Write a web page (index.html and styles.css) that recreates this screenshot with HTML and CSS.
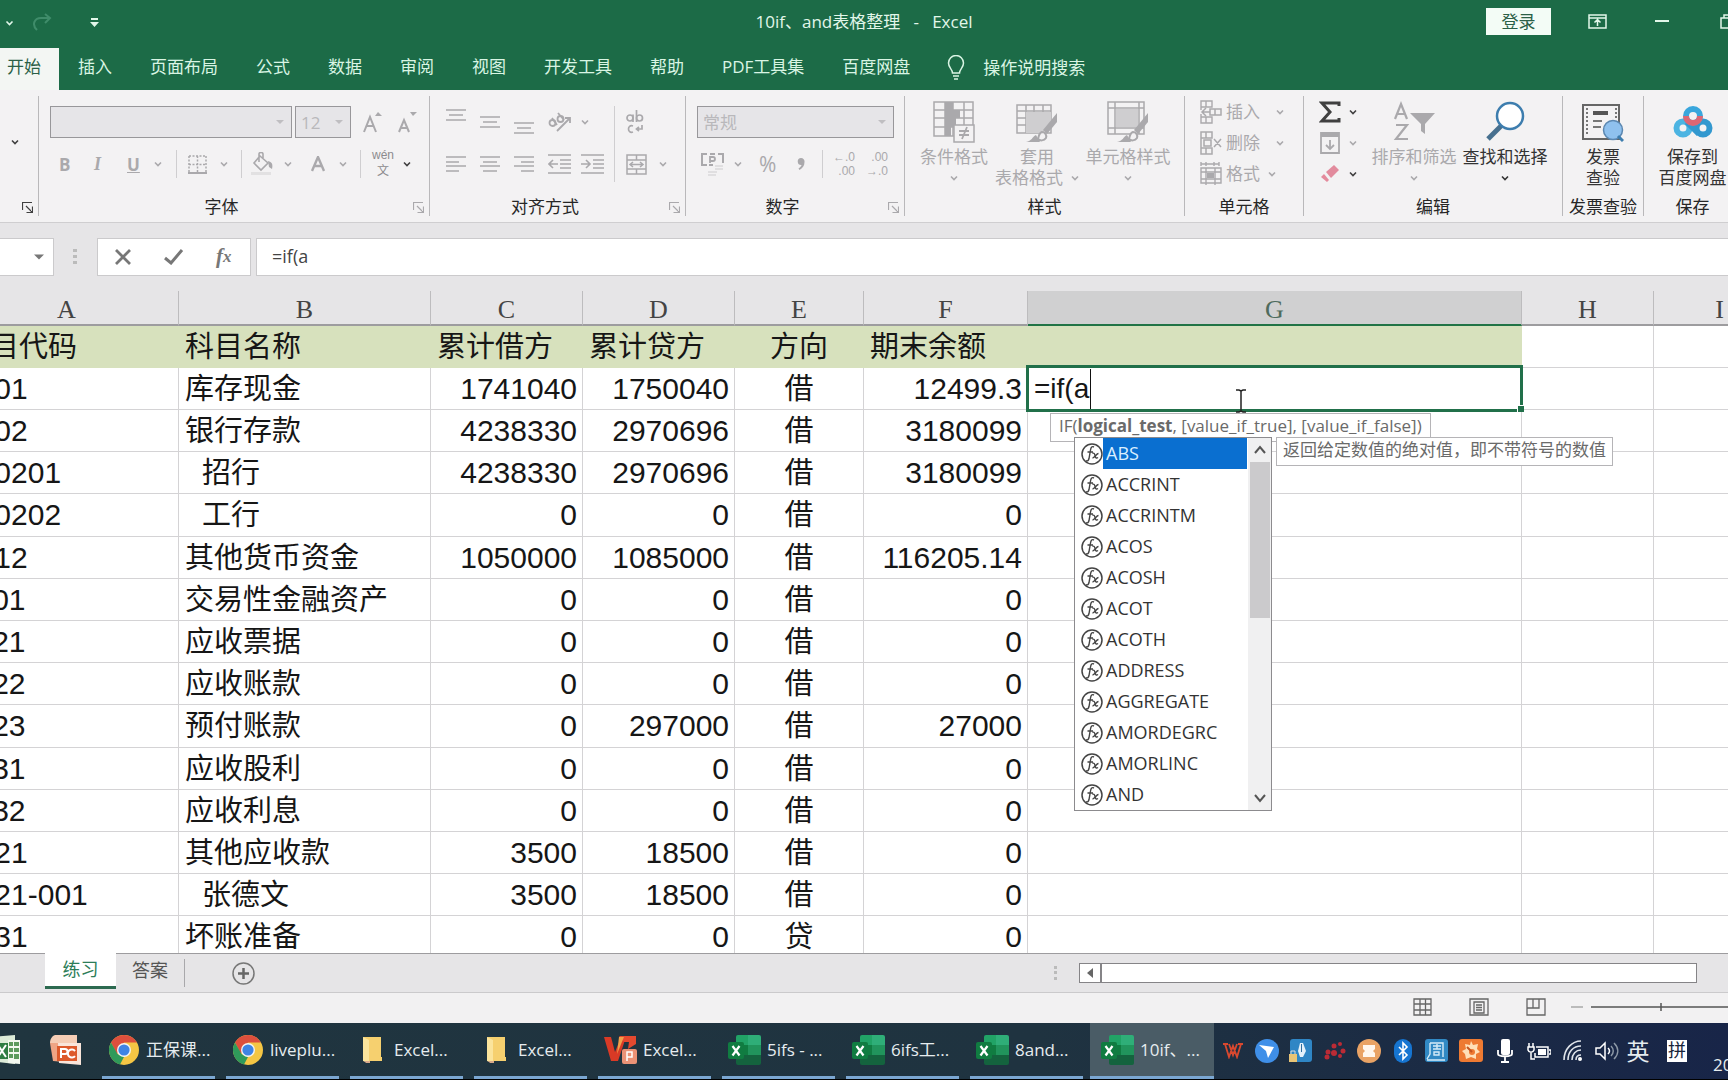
FILE: index.html
```html
<!DOCTYPE html>
<html lang="zh-CN">
<head>
<meta charset="utf-8">
<title>10if、and表格整理 - Excel</title>
<link rel="stylesheet" href="styles.css">
</head>
<body>
<svg class="defs" aria-hidden="true">
  <symbol id="chev" viewBox="0 0 8 6"><path d="M1 1.500 4 4.500 7 1.500" fill="none" stroke="currentColor" stroke-width="1.600"/></symbol>
  <symbol id="tri" viewBox="0 0 8 6"><path d="M0 1h8L4 5z" fill="currentColor"/></symbol>
  <symbol id="launch" viewBox="0 0 11 11"><path d="M.5 8V.5H10M4 4l6 6M10.500 4.500v6h-6" fill="none" stroke="currentColor" stroke-width="1.200"/></symbol>
  <symbol id="brush" viewBox="0 0 42 42"><path d="M41 12v9L31 33l-4-4z" fill="currentColor"/><path d="M26 31c3 0 5 3 4 6-2 3-6 3-8 1 1-4 1-6 4-7z" fill="#f3f2f3" stroke="currentColor" stroke-width="2"/><path d="M10 41c6-1 6-5 10-7l4 7z" fill="currentColor"/></symbol>
  <symbol id="fx" viewBox="0 0 22 22"><circle cx="11" cy="11" r="10" fill="#fff" stroke="#444" stroke-width="1.500"/><path d="M13 4c-2-1-3 0-3.500 3L8 15.500c-.4 2-1.500 3-3 2M6.500 9H12M11.500 10.500c1.500-1 2 0 2.500 2s1 3.500 3 2M17.500 10.500c-2 0-4 4.500-6 4.500" fill="none" stroke="#444" stroke-width="1.400"/></symbol>
  <symbol id="chrome" viewBox="0 0 32 32"><circle cx="16" cy="16" r="15" fill="#f5c644"/><path d="M3 8.500A15 15 0 0 1 29 8.500H16L9 20z" fill="#dd4f3d"/><path d="M3 8.500 9.500 20 16 23l-4 7.500A15 15 0 0 1 3 8.500z" fill="#2f9a5a"/><circle cx="16" cy="16" r="7" fill="#f4f4f4"/><circle cx="16" cy="16" r="5.600" fill="#3f84e5"/></symbol>
  <symbol id="folder" viewBox="0 0 20 28"><path d="M1 1h18v20h1v4H6z" fill="#f6d06f"/><path d="M1 1 7 4v23l-6-2z" fill="#fbe49c"/><path d="M2 25h6v2H4z" fill="#d9a98a"/></symbol>
  <symbol id="xl" viewBox="0 0 33 30"><path d="M8 2a2 2 0 0 1 2-2h10v10H8z" fill="#21a366"/><path d="M20 0h11a2 2 0 0 1 2 2v8H20z" fill="#2fae78"/><path d="M8 10h12v10H8z" fill="#107c41"/><path d="M20 10h13v10H20z" fill="#21945c"/><path d="M8 20h25v8a2 2 0 0 1-2 2H10a2 2 0 0 1-2-2z" fill="#14633e"/><rect y="7" width="16" height="17" rx="2" fill="#107c41"/><path d="m4.500 11 7 9.500m0-9.500-7 9.500" stroke="#fff" stroke-width="2.200"/></symbol>
</svg>

<header class="titlebar">
  <div class="quick">
    <button class="ico" aria-label="撤消选项"><svg width="9" height="6"><use href="#chev"/></svg></button>
    <button class="ico redo" aria-label="恢复"><svg width="20" height="19" viewBox="0 0 20 19"><path d="M5 17C-1 11 3 5 9 5h9M13 1l5 4-5 5" fill="none" stroke="currentColor" stroke-width="2"/></svg></button>
    <button class="ico" aria-label="自定义快速访问工具栏"><svg width="9" height="9" viewBox="0 0 9 9"><path d="M1 0h7v2H1zM0 4h9L4.500 9z" fill="currentColor"/></svg></button>
  </div>
  <h1>10if、and表格整理&nbsp;&nbsp; -&nbsp;&nbsp; Excel</h1>
  <div class="window">
    <button class="signin">登录</button>
    <button class="ico w60" aria-label="功能区显示选项"><svg width="19" height="15" viewBox="0 0 19 15"><path d="M1 1h17v13H1zM1 4h17M9.500 12V6M6.500 8.500l3-3 3 3" fill="none" stroke="currentColor" stroke-width="1.500"/></svg></button>
    <button class="ico w70" aria-label="最小化"><svg width="14" height="2"><rect width="14" height="2" fill="currentColor"/></svg></button>
    <button class="ico restore" aria-label="还原"><svg width="17" height="15" viewBox="0 0 17 15"><path d="M1 4h11v10H1zM4 4V1h12v10h-4" fill="none" stroke="currentColor" stroke-width="1.500"/></svg></button>
  </div>
</header>

<nav class="tabs">
  <button class="on">开始</button><button>插入</button><button>页面布局</button><button>公式</button><button>数据</button><button>审阅</button><button>视图</button><button>开发工具</button><button>帮助</button><button>PDF工具集</button><button>百度网盘</button>
  <button class="tell"><svg width="18" height="25" viewBox="0 0 18 25"><path d="M5.500 18c0-4-4-5-4-10a7.500 7.500 0 0 1 15 0c0 5-4 6-4 10zM6 21h6M7 24h4" fill="none" stroke="currentColor" stroke-width="1.500"/></svg>操作说明搜索</button>
</nav>

<section class="ribbon">
  <div class="group clip">
    <div class="body"><button class="ico dark" aria-label="粘贴选项"><svg width="8" height="6"><use href="#chev"/></svg></button></div>
    <div class="label"><span></span><button class="ico launch dark" aria-label="剪贴板"><svg width="11" height="11"><use href="#launch"/></svg></button></div>
  </div>

  <div class="group font">
    <div class="body rows">
      <div class="row">
        <select class="sel-font" aria-label="字体" disabled><option></option></select>
        <select class="sel-size" aria-label="字号" disabled><option>12</option></select>
        <button class="ico glyph" aria-label="增大字号"><svg width="20" height="22" viewBox="0 0 20 22"><path d="m1 21 6-15 6 15M3 15h8" fill="none" stroke="currentColor" stroke-width="2"/><path d="m12 5 3-4 4 4z" fill="currentColor"/></svg></button>
        <button class="ico glyph" aria-label="减小字号"><svg width="20" height="22" viewBox="0 0 20 22"><path d="m1 21 5-12 5 12M3 17h6" fill="none" stroke="currentColor" stroke-width="2"/><path d="m12 1 3 4 4-4z" fill="currentColor"/></svg></button>
      </div>
      <div class="row font-row">
        <button class="ico b" aria-label="加粗">B</button><button class="ico i" aria-label="倾斜">I</button><button class="ico u" aria-label="下划线">U</button>
        <button class="ico" aria-label="下划线选项"><svg width="8" height="6"><use href="#chev"/></svg></button>
        <i class="sep"></i>
        <button class="ico" aria-label="边框"><svg width="19" height="19" viewBox="0 0 19 19"><path d="M1 1h17M1 1v16M18 1v16M9.500 1v16M1 9.500h17" stroke="currentColor" stroke-width="1.500" stroke-dasharray="2 1.500"/><path d="M0 18h19" stroke="currentColor" stroke-width="2"/></svg></button>
        <button class="ico" aria-label="边框选项"><svg width="8" height="6"><use href="#chev"/></svg></button>
        <i class="sep"></i>
        <button class="ico" aria-label="填充颜色"><svg width="24" height="24" viewBox="0 0 24 24"><path d="m9 4 8 7-7 7-7-7zM8 10V2c0-2 4-2 4 0v4" fill="none" stroke="currentColor" stroke-width="1.600"/><path d="M17 9c4 1 5 3 4 8l-3-2z" fill="currentColor"/><path d="M0 20h20v3H0z" fill="#e2e1e2"/></svg></button>
        <button class="ico" aria-label="填充选项"><svg width="8" height="6"><use href="#chev"/></svg></button>
        <button class="ico" aria-label="字体颜色"><svg width="14" height="16" viewBox="0 0 14 16"><path d="M1 15 7 1l6 14M3 10h8" fill="none" stroke="currentColor" stroke-width="2.400"/></svg></button>
        <button class="ico" aria-label="颜色选项"><svg width="8" height="6"><use href="#chev"/></svg></button>
        <i class="sep"></i>
        <button class="ico wen"><span>wén</span><span>文</span></button>
        <button class="ico dark" aria-label="拼音选项"><svg width="8" height="6"><use href="#chev"/></svg></button>
      </div>
    </div>
    <div class="label"><span>字体</span><button class="ico launch" aria-label="字体设置"><svg width="11" height="11"><use href="#launch"/></svg></button></div>
  </div>

  <div class="group align">
    <div class="body split">
      <div class="align-grid">
        <button class="ico top" aria-label="顶端对齐"><svg width="20" height="12" viewBox="0 0 20 12"><path d="M0 1h20M3 6h14M0 11h20" stroke="currentColor" stroke-width="1.500"/></svg></button>
        <button class="ico" aria-label="垂直居中"><svg width="20" height="12" viewBox="0 0 20 12"><path d="M0 1h20M3 6h14M0 11h20" stroke="currentColor" stroke-width="1.500"/></svg></button>
        <button class="ico bottom" aria-label="底端对齐"><svg width="20" height="12" viewBox="0 0 20 12"><path d="M0 1h20M3 6h14M0 11h20" stroke="currentColor" stroke-width="1.500"/></svg></button>
        <button class="ico" aria-label="方向"><svg width="24" height="22" viewBox="0 0 24 22"><g fill="none" stroke="currentColor" stroke-width="1.800"><circle cx="4.500" cy="12" r="3"/><path d="m4 7 5 7M10 2l6 7"/><circle cx="12.500" cy="8" r="3"/><path d="M9 20 22 7M17 7h5v5"/></g></svg></button>
        <button class="ico" aria-label="方向选项"><svg width="8" height="6"><use href="#chev"/></svg></button>
        <button class="ico" aria-label="左对齐"><svg width="20" height="16" viewBox="0 0 20 16"><path d="M0 1h20M0 6h13M0 10h20M0 15h13" stroke="currentColor" stroke-width="1.500"/></svg></button>
        <button class="ico" aria-label="居中"><svg width="20" height="16" viewBox="0 0 20 16"><path d="M0 1h20M3 6h14M0 10h20M3 15h14" stroke="currentColor" stroke-width="1.500"/></svg></button>
        <button class="ico" aria-label="右对齐"><svg width="20" height="16" viewBox="0 0 20 16"><path d="M0 1h20M7 6h13M0 10h20M7 15h13" stroke="currentColor" stroke-width="1.500"/></svg></button>
        <button class="ico" aria-label="减少缩进"><svg width="23" height="20" viewBox="0 0 23 20"><path d="M0 1h23M12 6h11M12 10h11M12 14h11M0 19h23M10 10H2M5 6l-4 4 4 4" fill="none" stroke="currentColor" stroke-width="1.600"/></svg></button>
        <button class="ico" aria-label="增加缩进"><svg width="23" height="20" viewBox="0 0 23 20"><path d="M0 1h23M12 6h11M12 10h11M12 14h11M0 19h23M0 10h8M5 6l4 4-4 4" fill="none" stroke="currentColor" stroke-width="1.600"/></svg></button>
      </div>
      <i class="sep tall"></i>
      <div class="wrap-grid">
        <button class="ico" aria-label="自动换行"><svg width="18" height="24" viewBox="0 0 18 24"><g fill="none" stroke="currentColor" stroke-width="1.700"><circle cx="4" cy="8" r="3"/><path d="M7 4.500V12M10.500 0v12"/><circle cx="13.500" cy="8" r="3"/><path d="M7 16c-6-2-6 8 0 6M16 15v4h-5M13 17l-2.500 2 2.500 2"/></g></svg></button><span></span>
        <button class="ico" aria-label="合并后居中"><svg width="21" height="21" viewBox="0 0 21 21"><path d="M1 1h19v19H1zM1 6h19M1 15h19M10.500 1v5M10.500 15v5M4 10.500h13M7 8l-3 2.500L7 13M14 8l3 2.500-3 2.500" fill="none" stroke="currentColor" stroke-width="1.500"/></svg></button>
        <button class="ico" aria-label="合并选项"><svg width="8" height="6"><use href="#chev"/></svg></button>
      </div>
    </div>
    <div class="label"><span>对齐方式</span><button class="ico launch" aria-label="对齐设置"><svg width="11" height="11"><use href="#launch"/></svg></button></div>
  </div>

  <div class="group number">
    <div class="body rows">
      <div class="row"><select class="sel-num" aria-label="数字格式" disabled><option>常规</option></select></div>
      <div class="row num-row">
        <button class="ico" aria-label="会计数字格式"><svg width="24" height="24" viewBox="0 0 24 24"><path d="M1 7V2h5M17 2h5v5M1 7v6h5M9 2h5M22 7v4M8 13h4" fill="none" stroke="currentColor" stroke-width="2"/><path d="M9 11V5h3a2 2 0 0 1 0 4h-3" fill="none" stroke="currentColor" stroke-width="1.800"/><path d="M14 14h8M14 17h8M7 20h9M7 23h8" stroke="currentColor" opacity=".5"/></svg></button>
        <button class="ico" aria-label="货币选项"><svg width="8" height="6"><use href="#chev"/></svg></button>
        <button class="ico pct">%</button><button class="ico comma" aria-label="千位分隔"><svg width="8" height="12" viewBox="0 0 8 12"><path d="M4 0a3.500 3.500 0 0 1 3.500 4c0 4-2 6-5 8l-1-1.500C3.500 9 4.500 8 4.500 7A3.500 3.500 0 0 1 4 0z" fill="currentColor"/></svg></button>
        <i class="sep"></i>
        <button class="ico dec"><span>←.0</span><span>.00</span></button>
        <button class="ico dec"><span>.00</span><span>→.0</span></button>
      </div>
    </div>
    <div class="label"><span>数字</span><button class="ico launch" aria-label="数字设置"><svg width="11" height="11"><use href="#launch"/></svg></button></div>
  </div>

  <div class="group styles">
    <div class="body bigs">
      <button class="big w82"><svg width="42" height="42" viewBox="0 0 42 42"><path d="M1 1h39v34H1zM1 9h39M1 17h39M1 26h39M12 1v34M20 1v34M31 1v34" fill="none" stroke="currentColor" stroke-width="1.500"/><path d="M12 1h8v8h-8zM12 9h15v8H12zM12 17h11v9H12zM12 26h6v9h-6z" fill="currentColor"/><path d="M21 24h20v17H21z" fill="#f3f2f3" stroke="currentColor" stroke-width="1.500"/><path d="M26 30h10M26 34h10M34 26l-5 12" stroke="currentColor" stroke-width="1.800"/></svg>条件格式<svg class="drop" width="8" height="6"><use href="#chev"/></svg></button>
      <button class="big w84"><svg width="42" height="42" viewBox="0 0 42 42"><path d="M1 4h34v28H1zM1 10h34M1 17h34M1 24h34M10 4v28M18 4v28M27 4v28" fill="none" stroke="currentColor" stroke-width="1.500"/><path d="M10 11h25v14l-9 7H10z" fill="#cfced0"/><use href="#brush"/></svg>套用<span class="two">表格格式<svg width="8" height="6"><use href="#chev"/></svg></span></button>
      <button class="big w98"><svg width="42" height="42" viewBox="0 0 42 42"><path d="M1 1h36v32H1zM1 7h36M8 1v32M1 27h36M32 1v32" fill="none" stroke="currentColor" stroke-width="1.500"/><path d="M9 8h22v18H9z" fill="#cfced0"/><use href="#brush"/></svg>单元格样式<svg class="drop" width="8" height="6"><use href="#chev"/></svg></button>
    </div>
    <div class="label"><span>样式</span></div>
  </div>

  <div class="group cells">
    <div class="body stack">
      <button class="small"><svg width="22" height="24" viewBox="0 0 22 24"><path d="M1 1h11v6H1zM6 1v6M1 17h11v6H1zM6 17v6M1 7v3M1 14v3" fill="none" stroke="currentColor" stroke-width="1.400"/><path d="M10 9h11v6H10zM3 12h7M6 8l-4 4 4 4M15 9v6" fill="none" stroke="currentColor" stroke-width="1.500"/></svg>插入<svg class="far" width="8" height="6"><use href="#chev"/></svg></button>
      <button class="small"><svg width="22" height="24" viewBox="0 0 22 24"><path d="M1 1h11v6H1zM6 1v6M1 17h11v6H1zM6 17v6M1 7v10M4 9h7v6H4zM14 8l7 8M21 8l-7 8" fill="none" stroke="currentColor" stroke-width="1.500"/></svg>删除<svg class="far" width="8" height="6"><use href="#chev"/></svg></button>
      <button class="small"><svg width="22" height="24" viewBox="0 0 22 24"><path d="M1 2h18M1 0v4M19 0v4M6 0v4M14 0v4M1 6h20v15H1zM1 10h20M1 17h20M6 6v17M15 6v17" fill="none" stroke="currentColor" stroke-width="1.400"/><path d="M7 11h7v5H7z" fill="currentColor"/></svg>格式<svg class="near" width="8" height="6"><use href="#chev"/></svg></button>
    </div>
    <div class="label"><span>单元格</span></div>
  </div>

  <div class="group edit">
    <div class="body bigs">
      <div class="stack tools">
        <button class="small dark" aria-label="自动求和"><svg width="22" height="22" viewBox="0 0 22 22"><path d="M20 5V2H3l8 9-8 9h17v-3" fill="none" stroke="currentColor" stroke-width="3"/></svg><svg class="near" width="8" height="6"><use href="#chev"/></svg></button>
        <button class="small" aria-label="填充"><svg width="22" height="22" viewBox="0 0 22 22"><path d="M2 1h18v20H2zM11 8v9M7 13l4 4 4-4" fill="none" stroke="currentColor" stroke-width="1.800"/><path d="M2 1h18v4H2z" fill="currentColor"/></svg><svg class="near" width="8" height="6"><use href="#chev"/></svg></button>
        <button class="small dark" aria-label="清除"><svg width="22" height="22" viewBox="0 0 22 22"><path d="m2 14 3-3 5 6-2 2z" fill="#e48a9c"/><path d="m7 9 8-7 5 5-8 8z" fill="#e28b9d"/></svg><svg class="near" width="8" height="6"><use href="#chev"/></svg></button>
      </div>
      <button class="big w92"><svg width="42" height="42" viewBox="0 0 42 42"><path d="m2 18 6-15 6 15M4 13h8M3 24h11L3 38h12" fill="none" stroke="currentColor" stroke-width="2.200"/><path d="M17 12h25L32 23v10l-4-3v-7z" fill="currentColor"/></svg>排序和筛选<svg class="drop" width="8" height="6"><use href="#chev"/></svg></button>
      <button class="big w90 dark"><svg width="42" height="42" viewBox="0 0 42 42"><path d="m18 24-14 14" stroke="#47708f" stroke-width="5"/><circle cx="26" cy="15" r="13" fill="#fff" stroke="#3d7dae" stroke-width="2.500"/></svg>查找和选择<svg class="drop" width="8" height="6"><use href="#chev"/></svg></button>
    </div>
    <div class="label"><span>编辑</span></div>
  </div>

  <div class="group bill">
    <div class="body bigs"><button class="big dark"><svg width="42" height="42" viewBox="0 0 42 42"><path d="M1 4h36v34H1z" fill="none" stroke="#666" stroke-width="2"/><path d="M5 7v28M34 7v12" stroke="#777" stroke-width="2" stroke-dasharray="2 2"/><path d="M11 12h15" stroke="#555" stroke-width="4"/><path d="M11 20h9M11 26h8" stroke="#777" stroke-width="2"/><circle cx="31" cy="29" r="9.500" fill="#8fc1ee" stroke="#5b87b0" stroke-width="1.500"/><path d="m36 35 5 5" stroke="#3d7dae" stroke-width="3"/></svg>发票<span>查验</span></button></div>
    <div class="label"><span>发票查验</span></div>
  </div>

  <div class="group save">
    <div class="body bigs"><button class="big dark"><svg width="42" height="42" viewBox="0 0 42 42"><g fill="none" stroke-width="6"><circle cx="11" cy="27" r="6.500" stroke="#4cb4e2"/><circle cx="31" cy="27" r="6.500" stroke="#3298cf"/><path d="m15 21 12 12" stroke="#3298cf"/><circle cx="21" cy="15" r="7" stroke="#39a6dc"/><path d="M14 15a7 7 0 1 0 14 0" stroke="#dd6673"/></g></svg>保存到<span>百度网盘</span></button></div>
    <div class="label"><span>保存</span></div>
  </div>
</section>

<section class="formula">
  <button class="namebox" aria-label="名称框"><svg width="10" height="8" viewBox="0 0 8 6"><use href="#tri"/></svg></button>
  <svg class="dots" width="4" height="16" viewBox="0 0 4 16"><path d="M0 0h4v3H0zM0 6h4v3H0zM0 12h4v3H0z" fill="#bbb"/></svg>
  <div class="fbuttons">
    <button class="ico" aria-label="取消"><svg width="16" height="16" viewBox="0 0 16 16"><path d="m1 1 14 14M15 1 1 15" stroke="#777" stroke-width="2.800"/></svg></button>
    <button class="ico" aria-label="输入"><svg width="20" height="16" viewBox="0 0 20 16"><path d="m1 9 6 5L18 1" fill="none" stroke="#777" stroke-width="3"/></svg></button>
    <button class="ico fxb"><i>f</i><small>x</small></button>
  </div>
  <input class="finput" aria-label="编辑栏" value="=if(a">
</section>

<main class="sheet">
  <table>
    <colgroup><col class="ca"><col class="cb"><col class="cc"><col class="cc"><col class="ce"><col class="cf"><col class="cg"><col class="ch"><col></colgroup>
    <thead><tr><th>A</th><th>B</th><th>C</th><th>D</th><th>E</th><th>F</th><th class="sel">G</th><th>H</th><th>I</th></tr></thead>
    <tbody>
      <tr class="head"><td>科目代码</td><td>科目名称</td><td>累计借方</td><td>累计贷方</td><td class="mid">方向</td><td>期末余额</td><td></td><td></td><td></td></tr>
      <tr><td>1001</td><td>库存现金</td><td>1741040</td><td>1750040</td><td>借</td><td>12499.3</td><td class="active">
        <input class="cell-edit" aria-label="G2" value="=if(a"><i class="caret"></i><i class="handle"></i>
        <svg class="ibeam" width="12" height="24" viewBox="0 0 12 24"><path d="M1 1h3l2 1 2-1h3M1 23h3l2-1 2 1h3M6 2v20" fill="none" stroke="#222" stroke-width="1.500"/></svg>
        <div class="tip sig">IF(<b>logical_test</b>, [value_if_true], [value_if_false])</div>
        <div class="suggest">
          <ul role="listbox" aria-label="函数">
            <li class="on" role="option"><svg width="22" height="22"><use href="#fx"/></svg><span>ABS</span></li>
            <li role="option"><svg width="22" height="22"><use href="#fx"/></svg><span>ACCRINT</span></li>
            <li role="option"><svg width="22" height="22"><use href="#fx"/></svg><span>ACCRINTM</span></li>
            <li role="option"><svg width="22" height="22"><use href="#fx"/></svg><span>ACOS</span></li>
            <li role="option"><svg width="22" height="22"><use href="#fx"/></svg><span>ACOSH</span></li>
            <li role="option"><svg width="22" height="22"><use href="#fx"/></svg><span>ACOT</span></li>
            <li role="option"><svg width="22" height="22"><use href="#fx"/></svg><span>ACOTH</span></li>
            <li role="option"><svg width="22" height="22"><use href="#fx"/></svg><span>ADDRESS</span></li>
            <li role="option"><svg width="22" height="22"><use href="#fx"/></svg><span>AGGREGATE</span></li>
            <li role="option"><svg width="22" height="22"><use href="#fx"/></svg><span>AMORDEGRC</span></li>
            <li role="option"><svg width="22" height="22"><use href="#fx"/></svg><span>AMORLINC</span></li>
            <li role="option"><svg width="22" height="22"><use href="#fx"/></svg><span>AND</span></li>
          </ul>
          <div class="vbar"><svg width="12" height="24" viewBox="0 0 12 24"><path d="m1 15 5-6 5 6" fill="none" stroke="#555" stroke-width="2"/></svg><i></i><svg width="12" height="24" viewBox="0 0 12 24"><path d="m1 9 5 6 5-6" fill="none" stroke="#555" stroke-width="2"/></svg></div>
        </div>
        <div class="tip desc">返回给定数值的绝对值，即不带符号的数值</div>
      </td><td></td><td></td></tr>
      <tr><td>1002</td><td>银行存款</td><td>4238330</td><td>2970696</td><td>借</td><td>3180099</td><td></td><td></td><td></td></tr>
      <tr><td>100201</td><td class="sub">招行</td><td>4238330</td><td>2970696</td><td>借</td><td>3180099</td><td></td><td></td><td></td></tr>
      <tr><td>100202</td><td class="sub">工行</td><td>0</td><td>0</td><td>借</td><td>0</td><td></td><td></td><td></td></tr>
      <tr><td>1012</td><td>其他货币资金</td><td>1050000</td><td>1085000</td><td>借</td><td>116205.14</td><td></td><td></td><td></td></tr>
      <tr><td>1101</td><td>交易性金融资产</td><td>0</td><td>0</td><td>借</td><td>0</td><td></td><td></td><td></td></tr>
      <tr><td>1121</td><td>应收票据</td><td>0</td><td>0</td><td>借</td><td>0</td><td></td><td></td><td></td></tr>
      <tr><td>1122</td><td>应收账款</td><td>0</td><td>0</td><td>借</td><td>0</td><td></td><td></td><td></td></tr>
      <tr><td>1123</td><td>预付账款</td><td>0</td><td>297000</td><td>借</td><td>27000</td><td></td><td></td><td></td></tr>
      <tr><td>1131</td><td>应收股利</td><td>0</td><td>0</td><td>借</td><td>0</td><td></td><td></td><td></td></tr>
      <tr><td>1132</td><td>应收利息</td><td>0</td><td>0</td><td>借</td><td>0</td><td></td><td></td><td></td></tr>
      <tr><td>1221</td><td>其他应收款</td><td>3500</td><td>18500</td><td>借</td><td>0</td><td></td><td></td><td></td></tr>
      <tr><td>1221-001</td><td class="sub">张德文</td><td>3500</td><td>18500</td><td>借</td><td>0</td><td></td><td></td><td></td></tr>
      <tr><td>1231</td><td>坏账准备</td><td>0</td><td>0</td><td>贷</td><td>0</td><td></td><td></td><td></td></tr>
    </tbody>
  </table>
</main>

<section class="sheetbar">
  <button class="stab on">练习</button><button class="stab">答案</button><i class="sep"></i>
  <button class="ico plus" aria-label="新工作表"><svg width="23" height="23" viewBox="0 0 23 23"><circle cx="11.500" cy="11.500" r="10.500" fill="none" stroke="#777" stroke-width="1.500"/><path d="M11.500 6v11M6 11.500h11" stroke="#666" stroke-width="2.500"/></svg></button>
  <svg class="dots" width="4" height="16" viewBox="0 0 4 16"><path d="M0 1h3v3H0zM0 6h3v3H0zM0 12h3v3H0z" fill="#bbb"/></svg>
  <div class="hbar"><button class="ico" aria-label="向左滚动"><svg width="6" height="10" viewBox="0 0 6 10"><path d="M6 0v10L0 5z" fill="#666"/></svg></button><i></i></div>
</section>

<section class="status">
  <button class="ico" aria-label="普通"><svg width="19" height="18" viewBox="0 0 19 18"><path d="M1 1h17v16H1zM1 6h17M1 12h17M7 1v16M12.500 1v16" fill="none" stroke="currentColor" stroke-width="1.300"/></svg></button>
  <button class="ico" aria-label="页面布局"><svg width="20" height="18" viewBox="0 0 20 18"><path d="M1 1h18v16H1zM5 4h10v11H5zM7 7h6M7 9.500h6M7 12h6" fill="none" stroke="currentColor" stroke-width="1.300"/></svg></button>
  <button class="ico" aria-label="分页预览"><svg width="20" height="18" viewBox="0 0 20 18"><path d="M1 1h18v16H1zM7 1v9M1 10h12V1" fill="none" stroke="currentColor" stroke-width="1.300"/></svg></button>
  <button class="ico zoomout" aria-label="缩小"><svg width="12" height="2"><rect width="12" height="2" fill="#bbb"/></svg></button>
  <svg class="zoom" width="137" height="8" viewBox="0 0 137 8"><path d="M0 4h137M70 0v8" stroke="#555" stroke-width="1.500"/></svg>
</section>

<footer class="taskbar">
  <button class="pin xlold" aria-label="Excel"><svg width="32" height="32" viewBox="0 0 32 32"><path d="M4 3 27 1v29l-18-2z" fill="#dcebd8"/><path d="M20 6h12v24l-12-1z" fill="#f2f7ee"/><path d="M21 8h4v4h-4zM26 8h5v4h-5zM21 14h4v4h-4zM26 14h5v4h-5zM21 20h4v4h-4zM26 20h5v5h-5z" fill="#5d9a5c"/><path d="M8 9h12v16H8z" fill="#2f7d43"/><path d="m10 11 8 12m0-12-8 12" stroke="#fff" stroke-width="2"/></svg></button>
  <button class="pin" aria-label="PowerPoint"><svg width="32" height="32" viewBox="0 0 32 32"><path d="M6 1h22v8H1C1 5 3 2 6 1z" fill="#f5cdb5"/><path d="M1 9h25v20L4 27z" fill="#efa585"/><path d="M9 9h23v22l-22-2z" fill="#f9e5da"/><path d="M8 12h20v15H8z" fill="#dd5a2c"/><path d="M12 24v-9h4a2 2 0 0 1 0 5h-4M26 17a4 4 0 1 0 0 5" fill="none" stroke="#fff" stroke-width="2"/></svg></button>
  <div class="tasks">
    <button><svg width="32" height="32"><use href="#chrome"/></svg><span>正保课...</span></button>
    <button><svg width="32" height="32"><use href="#chrome"/></svg><span>liveplu...</span></button>
    <button><svg width="32" height="28"><use href="#folder"/></svg><span>Excel...</span></button>
    <button><svg width="32" height="28"><use href="#folder"/></svg><span>Excel...</span></button>
    <button><svg width="33" height="30" viewBox="0 0 33 30"><path d="M0 2h7l4 15 6-15h5l-8 24H7z" fill="#d93a26"/><path d="M15 1h17v8l-8 5 1-7h-5z" fill="#e4492f"/><path d="M15 2h5l-7 17z" fill="#f0a04a"/><rect x="18" y="14" width="15" height="15" rx="2" fill="#eb9276"/><path d="M23 26v-9h5v5h-5" fill="none" stroke="#fff" stroke-width="1.500"/></svg><span>Excel...</span></button>
    <button><svg width="33" height="30"><use href="#xl"/></svg><span>5ifs - ...</span></button>
    <button><svg width="33" height="30"><use href="#xl"/></svg><span>6ifs工...</span></button>
    <button><svg width="33" height="30"><use href="#xl"/></svg><span>8and...</span></button>
    <button class="on"><svg width="33" height="30"><use href="#xl"/></svg><span>10if、...</span></button>
  </div>
  <div class="tray">
    <svg width="20" height="16" viewBox="0 0 20 16"><path d="M0 1h5M15 1h5M2 1l4 13 4-11 4 11 4-13M6 1l4 11 4-11" fill="none" stroke="#d8482f" stroke-width="1.800"/></svg>
    <svg width="24" height="24" viewBox="0 0 24 24"><circle cx="12" cy="12" r="12" fill="#3f8fe8"/><path d="m4 6 15 2-6 11-2-7z" fill="#fff"/></svg>
    <svg width="24" height="24" viewBox="0 0 24 24"><rect width="22" height="23" x="1" rx="3" fill="#2f86c5"/><path d="m9 12 2-8 3 0 3 8-3 6h-3z" fill="#e4f1fa"/><path d="M12.500 5v8" stroke="#2f6f9f"/><rect y="15" width="8" height="8" fill="#e8c476"/><path d="M2 15v-3h4v3" fill="none" stroke="#ddd"/></svg>
    <svg width="22" height="18" viewBox="0 0 22 18"><g fill="#bb2b35"><circle cx="10" cy="11" r="3"/><circle cx="10" cy="4" r="2.500"/><circle cx="16" cy="2" r="2"/><circle cx="19" cy="9" r="2.500"/><circle cx="4" cy="10" r="2.500"/><circle cx="3" cy="15" r="2.500"/><circle cx="16" cy="14" r="2"/></g></svg>
    <svg width="24" height="24" viewBox="0 0 24 24"><circle cx="12" cy="12" r="12" fill="#e9a365"/><path d="M6 6h12v4l-2 2 2 2v4H6v-4l2-2-2-2z" fill="#fff7ee"/></svg>
    <svg width="20" height="24" viewBox="0 0 20 24"><rect x="1" width="18" height="24" rx="9" fill="#1675d1"/><path d="m6 8 8 8-4 4V4l4 4-8 8" fill="none" stroke="#fff" stroke-width="1.600"/></svg>
    <svg width="24" height="24" viewBox="0 0 24 24"><rect width="23" height="23" rx="3" fill="#3189c4"/><path d="M5 4h13v14M5 4v11l-3 5M8 7h8M8 10h8M9 13h5v3H9zM12 5v5M2 21h18" fill="none" stroke="#d6ecf8" stroke-width="1.400"/></svg>
    <svg width="24" height="24" viewBox="0 0 24 24"><rect width="24" height="23" rx="3" fill="#ee7a32"/><path d="m12 2 2 4 5-1-1 5 3 3-4 2v5l-5-2-5 2-1-5-3-3 4-2-1-5 5 1z" fill="#ffe0b8"/><circle cx="13" cy="13" r="3" fill="#ee7a32"/><path d="m8 8 5 5" stroke="#c55520" stroke-width="2"/></svg>
    <svg width="16" height="24" viewBox="0 0 16 24"><rect x="4" width="9" height="16" rx="2" fill="#fff"/><path d="M1 11v4c0 3 14 3 14 0v-4M8 18v4M4 23h8" fill="none" stroke="#fff" stroke-width="1.800"/></svg>
    <svg width="24" height="18" viewBox="0 0 24 18"><path d="M9 5h12v10H8v-4M22 8h2v4h-2M2 1v4M6 1v4M1 5h6v3c-1 3-5 3-6 0zM4 10v7h4" fill="none" stroke="#fff" stroke-width="1.500"/><path d="M11 7h8v6h-8z" fill="#fff"/></svg>
    <svg width="20" height="22" viewBox="0 0 20 22"><g fill="none" stroke="#dfe4ea" stroke-width="1.600"><path d="M1 20C1 9 9 1 18 1M5 20c0-8 5-14 13-14M9 20c0-6 4-10 9-10M13 20c0-3 2-5 5-5"/></g><circle cx="17" cy="19" r="2" fill="#fff"/></svg>
    <svg width="24" height="20" viewBox="0 0 24 20"><path d="M1 7h4l5-5v16l-5-5H1zM13 7c2 2 2 4 0 6" fill="none" stroke="#fff" stroke-width="1.500"/><path d="M16 5c3 3 3 7 0 10M19 2c5 5 5 11 0 16" fill="none" stroke="#8c98a6" stroke-width="1.500"/></svg>
    <button class="ime">英</button>
    <button class="ime pin-yin"><span>拼</span></button>
  </div>
  <time class="clock">20</time>
</footer>
</body>
</html>
```

FILE: styles.css
```css
* { box-sizing: border-box; }
body {
  margin: 0;
  height: 100vh;
  display: flex;
  flex-direction: column;
  overflow: hidden;
  background: #e6e5e7;
  font: 17px/21px "Open Sans", "Noto Sans CJK SC", sans-serif;
  color: #262626;
}
body > * { flex: none; }
button, input, select { font: inherit; color: inherit; border: 0; background: none; padding: 0; margin: 0; border-radius: 0; }
button { white-space: nowrap; }
svg { flex: none; }
.defs { position: absolute; width: 0; height: 0; }
.ico { display: flex; align-items: center; justify-content: flex-start; color: #aaa9ac; }
.ico.dark, .dark { color: #404040; }
.sep { width: 1px; height: 28px; background: #cfced0; }

/* title bar */
.titlebar { display: grid; grid-template-columns: 1fr auto 1fr; align-items: center; height: 48px; padding-bottom: 6px; background: #1c6b47; color: #e2f7ea; }
.titlebar h1 { margin: 0; font-size: 17px; font-weight: 400; }
.titlebar .ico { color: inherit; }
.quick { display: flex; align-items: center; gap: 18px; padding: 3px 0 0 5px; }
.titlebar .redo { width: 40px; color: #3f8c6a; }
.window { display: flex; justify-content: flex-end; align-items: center; overflow: hidden; }
.signin { width: 65px; height: 27px; margin-right: 16px; background: #f3fcf6; color: #2b5f47; }
.window .ico { justify-content: center; }
.w60 { width: 60px; }
.w70 { width: 70px; }
.window .restore { width: 31px; justify-content: flex-start; padding-left: 23px; }

/* ribbon tabs */
.tabs { display: flex; height: 42px; background: #1c6b47; color: #d9f5e4; }
.tabs button { padding: 0 19px 6px; }
.tabs .on { padding: 0 18px 6px 7px; background: #f3f6f3; color: #2b5f47; }
.tabs .tell { display: flex; align-items: center; gap: 18px; padding: 0 18px 4px; }

/* ribbon */
.ribbon { display: flex; height: 133px; padding: 6px 0; background: #f3f2f3; border-bottom: 1px solid #cfced0; overflow: hidden; }
.group { display: flex; flex-direction: column; flex: none; border-right: 1px solid #b9b8ba; }
.body { flex: 1; }
.label { display: flex; align-items: center; height: 19px; text-align: center; }
.label span { flex: 1; }
.label .launch { width: 25px; justify-content: flex-end; padding: 2px 5px 0 0; }
.clip { width: 39px; }
.clip .body { padding: 43px 0 0 11px; }
.font { width: 391px; }
.align { width: 256px; }
.number { width: 219px; }
.styles { width: 280px; }
.cells { width: 119px; }
.edit { width: 259px; }
.bill { width: 81px; }
.save { flex: 1 0 97px; border: 0; }
.rows { display: flex; flex-direction: column; gap: 10px; padding: 10px 0 0 11px; }
.row { display: flex; align-items: center; height: 32px; }
.row select { appearance: none; height: 32px; border: 1px solid #98979a; color: #b9b8bb; padding: 0 5px; opacity: 1;
  background: #e6e5e8 url("data:image/svg+xml,%3Csvg xmlns='http://www.w3.org/2000/svg' width='8' height='5'%3E%3Cpath d='M0 0h8L4 4z' fill='%23bfbec1'/%3E%3C/svg%3E") no-repeat right 7px center; }
.sel-font { width: 242px; margin-right: 3px; }
.sel-size { width: 56px; }
.sel-num { width: 197px; }
.glyph { width: 35px; padding-left: 12px; }
.font-row { display: grid; padding-left: 9px; grid-template-columns: 35px 33px 27px 22px 12px 32px 21px 10px 33px 27px 28px 21px 12px 31px 10px; }
.b { font-weight: 700; }
.i { font: italic 700 18px "Liberation Serif", serif; }
.u { font-weight: 700; text-decoration: underline; }
.wen { flex-direction: column; align-items: center; width: 22px; font: 12px/14px "Liberation Sans", "Noto Sans CJK SC", sans-serif; color: #8c8b8e; }
.wen span:last-child { line-height: 18px; }
.split { display: flex; padding: 10px 0 0 16px; }
.align-grid { display: grid; grid-template-columns: 34px 34px 34px 33px 33px; grid-template-rows: 32px 32px; row-gap: 10px; align-content: start; }
.align-grid .top { padding-bottom: 14px; }
.align-grid .bottom { padding-top: 12px; }
.sep.tall { height: 76px; }
.wrap-grid { display: grid; grid-template-columns: 33px 10px; grid-template-rows: 32px 32px; row-gap: 10px; padding-left: 11px; align-content: start; }
.num-row { display: grid; padding-left: 4px; grid-template-columns: 33px 25px 38px 25px 11px 33px 22px; }
.pct { font-size: 21px; }
.dec { flex-direction: column; align-items: flex-end; width: 22px; font: 12px/14px "Liberation Sans", sans-serif; }
.bigs { display: flex; }
.styles .bigs { padding-left: 8px; }
.big { display: flex; flex-direction: column; align-items: center; padding-top: 5px; color: #aaa9ac; }
.big > svg:first-child { margin-bottom: 3px; }
.big .drop { margin-top: 8px; }
.big .two { display: flex; align-items: center; gap: 8px; }
.big.dark { color: #333; }
.bill .big, .save .big { width: 100%; }
.w82 { width: 82px; }
.w84 { width: 84px; }
.w98 { width: 98px; }
.w92 { width: 92px; }
.w90 { width: 90px; }
.stack { display: flex; flex-direction: column; }
.cells .stack { padding-left: 15px; }
.small { display: flex; align-items: center; gap: 4px; height: 31px; color: #aaa9ac; }
.small .far { margin-left: 12px; }
.small .near { margin-left: 4px; }
.small.dark { color: #404040; }
.tools { width: 64px; padding-left: 15px; }

/* formula bar */
.formula { display: flex; align-items: center; height: 68px; padding: 0 0 1px; }
.namebox { display: flex; align-items: center; justify-content: flex-end; width: 54px; height: 38px; padding-right: 9px; background: #fff; border: 1px solid #cbcacc; border-left: 0; color: #777; }
.dots { margin: 0 20px 0 19px; }
.fbuttons { display: grid; grid-template-columns: 49px 52px 30px; width: 154px; height: 38px; padding-left: 17px; background: #fff; border: 1px solid #cbcacc; margin-right: 5px; }
.fxb { font: italic 700 21px "Liberation Serif", serif; color: #777; }
.fxb small { font-size: 17px; }
.finput { flex: 1; min-width: 0; height: 38px; padding: 0 15px 2px; background: #fff; border: 1px solid #cbcacc; border-right: 0; color: #444; font-size: 18px; }

/* worksheet */
.sheet { flex: 1 1 0; min-height: 0; overflow: hidden; background: #fff; }
table { width: calc(100% + 103px); margin-left: -45px; table-layout: fixed; border-collapse: separate; border-spacing: 0; font: 30px/40px "Liberation Sans", "Noto Sans CJK SC", sans-serif; color: #161616; }
.ca { width: 224px; }
.cb { width: 252px; }
.cc { width: 152px; }
.ce { width: 129px; }
.cf { width: 164px; }
.cg { width: 494px; }
.ch { width: 132px; }
th { height: 35px; padding: 4px 0 0; background: #e6e5e7; border-right: 1px solid #bdbcbe; border-bottom: 2px solid #9d9c9f; font: 26px/29px "Liberation Serif", serif; color: #444; }
th.sel { background: #d0d0d1; border-bottom-color: #217346; color: #4f6b5d; }
td { height: 42px; padding: 0 5px 0 6px; border-right: 1px solid #d4d3d5; border-bottom: 1px solid #d4d3d5; text-align: right; white-space: nowrap; }
tr:nth-child(5n) td { height: 43px; }
td:first-child, td:nth-child(2), .head td { text-align: left; }
td:nth-child(2), td:nth-child(5), .head td { font-size: 29px; }
td:nth-child(5), .head td.mid { text-align: center; padding: 0; }
td.sub { padding-left: 23px; }
.head td:nth-child(-n+7) { background: #d7e1bd; border-color: #d7e1bd; }
td.active { position: relative; text-align: left; }
.cell-edit { position: absolute; left: -2px; top: -3px; width: calc(100% + 4px); height: 47px; padding: 0 5px; border: 3px solid #21704a; background: #fff; font-size: 28px; }
.caret { position: absolute; left: 62px; top: 1px; width: 1px; height: 40px; background: #111; }
.handle { position: absolute; right: -3px; bottom: -3px; width: 7px; height: 7px; background: #21704a; border: 1px solid #fff; border-width: 1px 0 0 1px; }
.ibeam { position: absolute; left: 207px; top: 21px; }
.tip { position: absolute; height: 29px; padding: 0 8px; background: #fff; border: 1px solid #b5b4b7; font: 17px/23px "Open Sans", "Noto Sans CJK SC", sans-serif; color: #6a6a6a; }
.sig { left: 22px; top: 45px; }
.desc { left: 248px; top: 69px; z-index: 2; padding: 0 6px; }
.suggest { position: absolute; left: 46px; top: 69px; z-index: 1; display: flex; width: 198px; background: #fff; border: 1px solid #8c8b8e; font: 18px/31px "Open Sans", sans-serif; color: #333; }
.suggest ul { flex: 1; margin: 0; padding: 0 1px 0 6px; list-style: none; }
.suggest li { display: flex; align-items: center; height: 31px; }
.suggest li span { flex: 1; padding-left: 3px; }
.suggest .on span { background: #0a6fd0; color: #dcefff; }
.vbar { display: flex; flex-direction: column; align-items: center; width: 23px; background: #f0f0f1; }
.vbar i { width: 20px; height: 156px; margin-bottom: auto; background: #cbcacc; }

/* sheet tabs */
.sheetbar { display: flex; align-items: center; height: 39px; padding-left: 45px; border-top: 1px solid #9d9c9f; background: #e6e5e7; font-size: 18px; }
.stab { align-self: flex-start; height: 35px; padding: 0 16px 3px; color: #555; }
.stab.on { width: 71px; background: #fff; border-bottom: 3px solid #2c6a50; color: #2c7d58; margin-top: -1px; height: 36px; padding-bottom: 0; }
.sheetbar .sep { background: #a9a8ab; }
.plus { margin-left: 47px; }
.sheetbar .dots { margin: 0 21px 0 auto; }
.hbar { display: flex; width: 618px; height: 20px; margin-right: 31px; background: #fff; border: 1px solid #858487; }
.hbar button { width: 22px; justify-content: center; border-right: 2px solid #858487; }

/* status bar */
.status { display: flex; align-items: center; justify-content: flex-end; height: 31px; padding-bottom: 2px; background: #f2f1f2; border-top: 1px solid #cbcacc; }
.status .ico { margin-right: 37px; color: #666; }
.status .zoomout { margin: 0 8px 0 -12px; }

/* taskbar */
.taskbar { display: flex; height: 57px; background: linear-gradient(90deg, #20353f 0%, #1f3340 60%, #182548 100%); border-bottom: 1px solid #000; color: #e6ecef; overflow: hidden; }
.taskbar > * { flex: none; }
.pin { display: flex; align-items: center; width: 53px; padding-bottom: 2px; }
.xlold { width: 49px; justify-content: flex-end; padding-right: 29px; }
.tasks { display: flex; gap: 11px; }
.tasks button { display: flex; align-items: center; gap: 6px; width: 113px; padding: 0 0 0 6px; border-bottom: 3px solid #7ba7d2; }
.tasks .on { width: 124px; margin-left: -4px; padding-left: 11px; background: #4a5c66; }
.tray { display: grid; grid-template-columns: repeat(12, 34px) 28px 50px; align-items: center; justify-items: center; margin-left: 2px; }
.ime { font-size: 23px; line-height: 26px; }
.pin-yin span { display: block; width: 20px; height: 22px; font-size: 18px; line-height: 21px; background: #fff; color: #18243a; }
.taskbar .clock { align-self: flex-end; margin-left: 11px; padding-bottom: 4px; }
```
